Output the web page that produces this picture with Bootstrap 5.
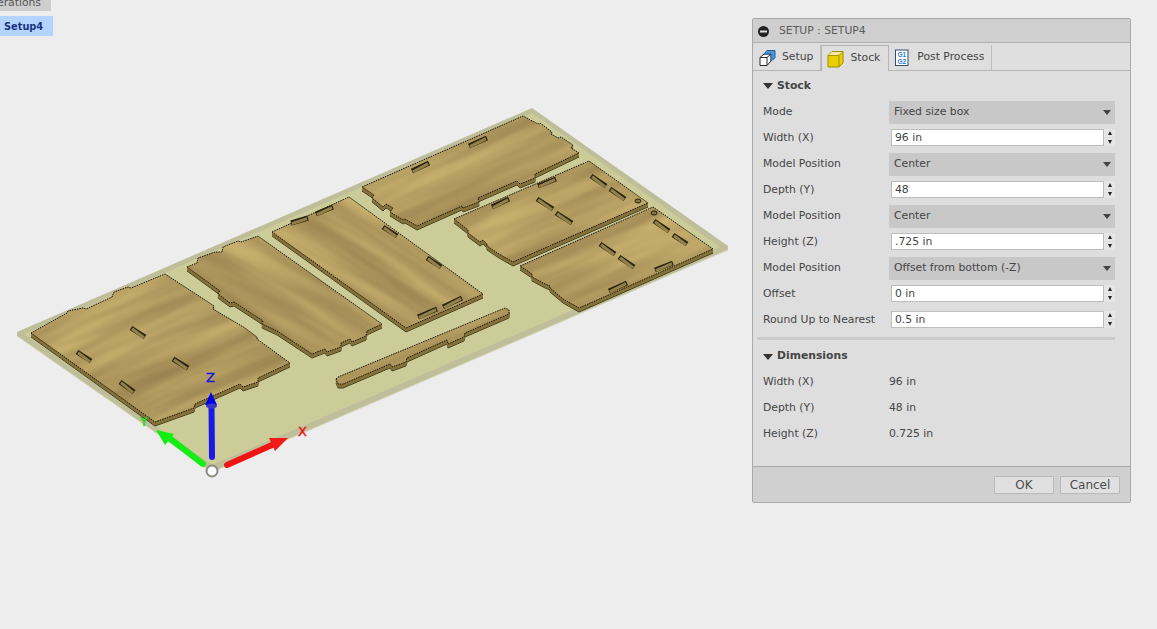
<!DOCTYPE html>
<html lang="en">
<head>
    <meta charset="UTF-8">
    <meta name="viewport" content="width=device-width, initial-scale=1">
    <title>Setup4 Stock</title>
    <link href="https://cdn.jsdelivr.net/npm/bootstrap@5.3.3/dist/css/bootstrap.min.css" rel="stylesheet">
    <style>
        body {
            background: #ededed;
            font-family: "DejaVu Sans", sans-serif;
            font-size: 10.8px;
            color: #454545;
            height: 629px;
            overflow: hidden;
        }
        .model-view { position: absolute; left: 0; top: 0; }
        .model-view text { font-family: "DejaVu Sans", sans-serif; font-size: 13px; stroke-width: 0.4px; }

        .op-tree { position: absolute; left: 0; top: 0; width: 53px; }
        .op-parent { background: #cecece; width: 51px; height: 11px; line-height: 6px; overflow: hidden; white-space: nowrap; direction: rtl; padding-right: 10px; color: #555; }
        .op-active { background: #b3d4ff; height: 20px; line-height: 21px; margin-top: 5px; padding-left: 4px; font-size: 9.8px; font-weight: 700; color: #1c3480; }

        .setup-panel {
            position: absolute; left: 752px; top: 18px; width: 379px; height: 485px;
            background: #dedede; border: 1px solid #a9a9a9; border-radius: 2px;
        }
        .panel-head { height: 24px; background: #cfcfcf; border-bottom: 1px solid #b0b0b0; padding: 1px 0 0 5px; gap: 10px; color: #5c5c5c; }
        .tab-strip { height: 28px; border-bottom: 1px solid #b5b5b5; padding: 0; flex-wrap: nowrap; margin: 0; align-items: flex-end; }
        .tab-strip .nav-link {
            height: 25px; padding: 0 7px 0 6px; gap: 6px; color: #454545; font-size: 10.8px;
            border: 0; border-right: 1px solid #bdbdbd; border-radius: 0; background: none; margin: 0;
        }
        .tab-strip .nav-link.active {
            height: 26px; background: #dedede; color: #454545;
            border: 1px solid #b5b5b5; border-bottom: 0; border-radius: 0; margin-bottom: -1px; padding: 0 8px 0 5px;
        }
        .tab-strip .post-tab { gap: 8px; padding-right: 7px; }
        .panel-body-area { padding: 0 15px 0 10px; }
        .group-title { height: 28px; padding-top: 2px; font-weight: 700; gap: 4px; color: #454545; }
        .dim-title { height: 27px; }
        .tri { width: 0; height: 0; border-left: 5px solid transparent; border-right: 5px solid transparent; border-top: 6px solid #333; }
        .prop-row { height: 26px; }
        .prop-label { width: 126px; flex: none; }
        .prop-select {
            height: 23px; padding: 0 4px 0 5px; font-size: 10.8px; color: #454545; font-family: inherit;
            background-color: #c8c8c8; border: 0; border-radius: 1px; box-shadow: none;
            background-position: right 4px center; background-size: 8px 5px;
            background-image: url("data:image/svg+xml,%3csvg xmlns='http://www.w3.org/2000/svg' viewBox='0 0 8 5'%3e%3cpath fill='%23444' d='M0 0h8L4 5z'/%3e%3c/svg%3e");
        }
        .prop-input {
            height: 17px; margin: 0 0 2px 2px; padding: 1px 3px 0; font-size: 10.8px; color: #454545; font-family: inherit;
            background: #fff; border: 1px solid #bdbdbd; border-radius: 0; box-shadow: none; min-height: 0;
        }
        .spin { width: 11px; flex: none; margin-bottom: 2px; gap: 1px; }
        .spin span { height: 8px; background: #e6e6e6; display: flex; align-items: center; justify-content: center; }
        .spin-up { width: 0; height: 0; border-left: 2.5px solid transparent; border-right: 2.5px solid transparent; border-bottom: 4px solid #222; }
        .spin-down { width: 0; height: 0; border-left: 2.5px solid transparent; border-right: 2.5px solid transparent; border-top: 4px solid #222; }
        .group-rule { height: 3px; background: #cbcbcb; margin: 4px 0 2px -6px; }
        .panel-foot { position: absolute; left: 0; right: 0; bottom: 0; height: 36px; background: #d0d0d0; border-top: 1px solid #a9a9a9; padding: 9px 10px 0 0; gap: 6px; }
        .foot-btn { width: 60px; height: 18px; padding: 0; font-size: 12px; line-height: 15px; color: #4c4c4c; background: #e0e0e0; border: 1px solid #b9b9b9; border-radius: 1px; font-family: inherit; }
    </style>
</head>
<body>

    <svg class="model-view" id="modelView" width="1157" height="629" viewBox="0 0 1157 629" xmlns="http://www.w3.org/2000/svg">
        <defs>
            <filter id="woodGrain" x="0" y="0" width="100%" height="100%" color-interpolation-filters="sRGB">
                <feTurbulence type="fractalNoise" baseFrequency="0.005 0.045" numOctaves="3" seed="7"/>
                <feColorMatrix type="matrix" values="0.3 0 0 0 0.54  0.3 0 0 0 0.45  0.2 0 0 0 0.27  0 0 0 0 1"/>
            </filter>
        </defs>

        <!-- stock sheet -->
        <polygon points="17,332 532,108 728,246 728,250 212,472 17,336" fill="#bebe9a"/>
        <polygon points="24,334 532,113 720,247 212,465" fill="#cccc99"/>
        <polyline points="17,336 212,472 728,250" fill="none" stroke="#d8d8bc" stroke-width="1"/>

        <g id="parts"></g>

        <!-- triad -->
        <path d="M212 457 L211.500 405" stroke="#1a1ae6" stroke-width="6" stroke-linecap="round"/>
        <polygon points="211,392 217,405 205,405" fill="#0000e8"/>
        <ellipse cx="211.500" cy="406" rx="5.500" ry="2.500" fill="#3a3ac8"/>
        <path d="M203 464 L168 437" stroke="#14ee14" stroke-width="6" stroke-linecap="round"/>
        <polygon points="156,430 174,434 165,445" fill="#10f010"/>
        <path d="M227 465 L272 445" stroke="#f01414" stroke-width="6" stroke-linecap="round"/>
        <polygon points="288,438 269,438 275,451" fill="#f01a1a"/>
        <circle cx="212" cy="471" r="5.500" fill="#fafafa" stroke="#8b8b80" stroke-width="2"/>
        <text x="206" y="382" fill="#1414e0" stroke="#1414e0">Z</text>
        <text x="140" y="426" fill="#14dd14" stroke="#14dd14">Y</text>
        <text x="298" y="436" fill="#e81414" stroke="#e81414">X</text>
    </svg>

    <div class="op-tree">
        <div class="op-parent">Operations</div>
        <div class="op-active">Setup4</div>
    </div>

    <div class="setup-panel">
        <div class="panel-head d-flex align-items-center">
            <svg width="11" height="11" viewBox="0 0 11 11"><circle cx="5.500" cy="5.500" r="5.500" fill="#222"/><rect x="2" y="4.500" width="7" height="2" fill="#ddd"/></svg>
            <span>SETUP : SETUP4</span>
        </div>

        <ul class="nav nav-tabs tab-strip">
            <li class="nav-item">
                <a class="nav-link d-flex align-items-center" href="#">
                    <svg width="17" height="18" viewBox="0 0 17 18">
                        <path d="M1 8.500 L5 5 H12 V12 L8 16.500 H1z" fill="#fbfbfb" stroke="#2b2b2b"/>
                        <path d="M5 5 L8 1.500 H16 V9 L12 12 V5z" fill="#4d93cf" stroke="#1f5f95"/>
                        <path d="M1 8.500 H8 V16.500 M8 8.500 L12 5" fill="none" stroke="#2b2b2b"/>
                    </svg>
                    Setup
                </a>
            </li>
            <li class="nav-item">
                <a class="nav-link active d-flex align-items-center" href="#">
                    <svg width="17" height="18" viewBox="0 0 17 18">
                        <path d="M1 5.500 L5 1.500 H16 V13 L12 17 H1z" fill="#e8d000" stroke="#a08c00"/>
                        <path d="M1 5.500 H12 V17 M12 5.500 L16 1.500" fill="none" stroke="#a89400"/>
                        <path d="M1.500 5 L5 2 H15 L11.500 5z" fill="#f3e99a"/>
                    </svg>
                    Stock
                </a>
            </li>
            <li class="nav-item">
                <a class="nav-link post-tab d-flex align-items-center" href="#">
                    <svg width="14" height="18" viewBox="0 0 14 18">
                        <rect x="0.500" y="1" width="12.500" height="15.500" fill="#fff" stroke="#2f4f6f"/>
                        <text x="6.800" y="8" text-anchor="middle" font-family="Liberation Sans, sans-serif" font-weight="700" font-size="6.500" fill="#2a7fd8">G1</text>
                        <text x="6.800" y="14.500" text-anchor="middle" font-family="Liberation Sans, sans-serif" font-weight="700" font-size="6.500" fill="#2a7fd8">G2</text>
                    </svg>
                    Post Process
                </a>
            </li>
        </ul>

        <div class="panel-body-area">
            <div class="group-title d-flex align-items-center"><span class="tri"></span>Stock</div>

            <div class="prop-row d-flex align-items-center">
                <div class="prop-label">Mode</div>
                <select class="form-select prop-select"><option>Fixed size box</option></select>
            </div>
            <div class="prop-row d-flex align-items-center">
                <div class="prop-label">Width (X)</div>
                <input class="form-control prop-input" value="96 in">
                <div class="spin d-flex flex-column"><span><i class="spin-up"></i></span><span><i class="spin-down"></i></span></div>
            </div>
            <div class="prop-row d-flex align-items-center">
                <div class="prop-label">Model Position</div>
                <select class="form-select prop-select"><option>Center</option></select>
            </div>
            <div class="prop-row d-flex align-items-center">
                <div class="prop-label">Depth (Y)</div>
                <input class="form-control prop-input" value="48">
                <div class="spin d-flex flex-column"><span><i class="spin-up"></i></span><span><i class="spin-down"></i></span></div>
            </div>
            <div class="prop-row d-flex align-items-center">
                <div class="prop-label">Model Position</div>
                <select class="form-select prop-select"><option>Center</option></select>
            </div>
            <div class="prop-row d-flex align-items-center">
                <div class="prop-label">Height (Z)</div>
                <input class="form-control prop-input" value=".725 in">
                <div class="spin d-flex flex-column"><span><i class="spin-up"></i></span><span><i class="spin-down"></i></span></div>
            </div>
            <div class="prop-row d-flex align-items-center">
                <div class="prop-label">Model Position</div>
                <select class="form-select prop-select"><option>Offset from bottom (-Z)</option></select>
            </div>
            <div class="prop-row d-flex align-items-center">
                <div class="prop-label">Offset</div>
                <input class="form-control prop-input" value="0 in">
                <div class="spin d-flex flex-column"><span><i class="spin-up"></i></span><span><i class="spin-down"></i></span></div>
            </div>
            <div class="prop-row d-flex align-items-center">
                <div class="prop-label">Round Up to Nearest</div>
                <input class="form-control prop-input" value="0.5 in">
                <div class="spin d-flex flex-column"><span><i class="spin-up"></i></span><span><i class="spin-down"></i></span></div>
            </div>

            <div class="group-rule"></div>

            <div class="group-title dim-title d-flex align-items-center"><span class="tri"></span>Dimensions</div>
            <div class="prop-row d-flex align-items-center"><div class="prop-label">Width (X)</div><div>96 in</div></div>
            <div class="prop-row d-flex align-items-center"><div class="prop-label">Depth (Y)</div><div>48 in</div></div>
            <div class="prop-row d-flex align-items-center"><div class="prop-label">Height (Z)</div><div>0.725 in</div></div>
        </div>

        <div class="panel-foot d-flex justify-content-end">
            <button class="btn foot-btn">OK</button>
            <button class="btn foot-btn">Cancel</button>
        </div>
    </div>

    <script src="https://cdn.jsdelivr.net/npm/bootstrap@5.3.3/dist/js/bootstrap.bundle.min.js"></script>
    <script>
        // outline of each plywood part in page pixels, slots as end points, grain angle in degrees
        const parts = [
            { angle: -24, outline: "31,333 67,313 68,311 83,308 86,309 112,297 114,292 128,287 131,288 165,274 202,298 214,306 213,309 245,328 257,337 257,339 290,363 258,378 258,382 243,387 240,384 213,396 195,404 194,408 155,422",
              slots: [[131,328,145,337],[77,352,91,361],[173,359,188,368],[120,382,134,392]] },
            { angle: 30, outline: "187,267 197,263 198,258 215,252 222,252 223,247 238,241 241,242 258,236 382,324 367,331 366,336 352,342 350,339 341,343 341,347 327,352 325,349 312,354 277,331 262,324 263,321 234,302 230,303 218,294 220,291",
              slots: [] },
            { angle: 32, outline: "272,232 349,197 483,294 406,328",
              slots: [[291,223,308,218],[316,214,333,207],[383,227,397,236],[427,258,441,267],[418,317,437,309],[443,307,462,298]] },
            { angle: -24, outline: "362,187 523,116 538,124 540,123 552,132 551,134 558,138 561,137 573,145 571,148 579,153 535,174 535,178 520,184 517,181 478,198 479,202 463,208 462,206 417,226 405,219 403,220 390,212 393,208 386,204 383,207 372,198 374,195",
              slots: [[412,171,429,163],[469,146,487,138]] },
            { angle: -24, outline: "454,219 589,161 648,203 513,262 499,254 487,246 487,244 483,240 480,242 468,233 468,230",
              slots: [[538,186,556,179],[492,207,509,199],[591,176,606,186],[610,189,625,199],[537,199,553,209],[556,213,572,223]], hole: [638,201] },
            { angle: -24, outline: "520,266 653,207 713,249 579,308 563,299 550,288 550,286 545,284 532,277 532,274",
              slots: [[654,221,669,231],[673,235,687,244],[600,244,615,254],[619,257,634,267],[655,270,673,263],[609,291,627,283]], hole: [654,213] },
            { angle: -23, outline: "336,379 338,377 505,308 509,310 509,314 465,333 464,337 448,344 447,340 407,358 406,362 392,367 390,364 343,384 338,384",
              slots: [] }
        ];

        const NS = "http://www.w3.org/2000/svg";
        const holder = document.getElementById("parts");
        const defs = document.querySelector("#modelView defs");

        function add(parent, tag, attrs) {
            const el = document.createElementNS(NS, tag);
            for (const key in attrs) el.setAttribute(key, attrs[key]);
            parent.appendChild(el);
            return el;
        }

        parts.forEach((part, i) => {
            // edge of the board, stacked copies going down
            for (let dy = 4; dy >= 1; dy--) {
                add(holder, "polygon", {
                    points: part.outline, transform: `translate(0 ${dy})`,
                    fill: "#857239", stroke: dy === 4 ? "#2a2410" : "#857239", "stroke-width": 0.8
                });
            }
            const clip = add(defs, "clipPath", { id: "partClip" + i });
            add(clip, "polygon", { points: part.outline });
            const top = add(holder, "g", { "clip-path": `url(#partClip${i})` });
            const grain = add(top, "g", { transform: `rotate(${part.angle} 500 300)` });
            add(grain, "rect", { x: -500, y: -500, width: 2000, height: 1600, filter: "url(#woodGrain)" });
            add(holder, "polygon", {
                points: part.outline, fill: "none", stroke: "#141008",
                "stroke-width": 1, "stroke-dasharray": "1.500 1"
            });
            part.slots.forEach(s => {
                add(holder, "line", { x1: s[0], y1: s[1], x2: s[2], y2: s[3], stroke: "#2a2410", "stroke-width": 5 });
                add(holder, "line", { x1: s[0] + 1, y1: s[1] + 0.7, x2: s[2] - 1, y2: s[3] + 0.7, stroke: "#94814a", "stroke-width": 3 });
            });
            if (part.hole) {
                add(holder, "ellipse", { cx: part.hole[0], cy: part.hole[1], rx: 3, ry: 2, fill: "#8a7740", stroke: "#241e0c" });
            }
        });
    </script>

</body>
</html>
